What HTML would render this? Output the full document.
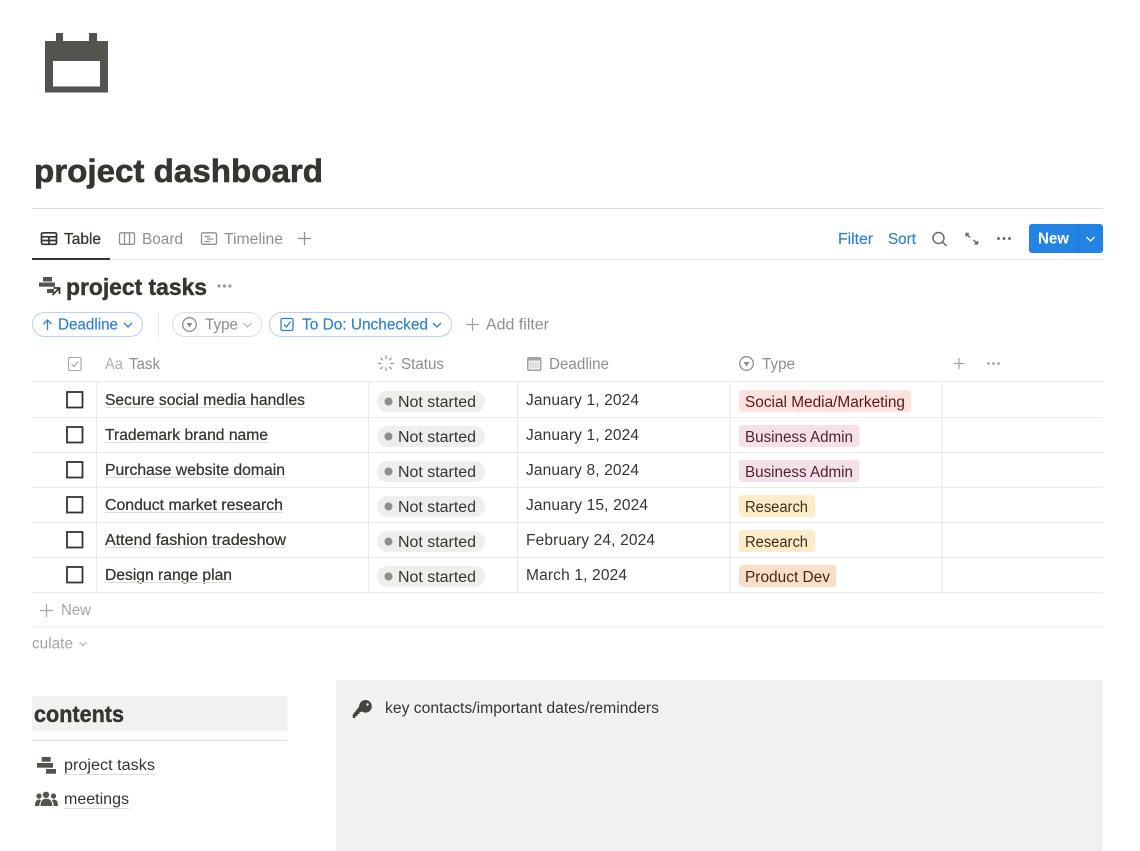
<!DOCTYPE html>
<html lang="en">
<head>
<meta charset="utf-8">
<title>project dashboard</title>
<style>
html,body{margin:0;padding:0;background:#fff;width:1140px;height:851px;overflow:hidden}
svg{display:block;filter:blur(.3px)}
text{font-family:"Liberation Sans",sans-serif;white-space:pre}
.g{fill:#8f8e8a;font-size:15.5px}
.b{fill:#2b7fd6;font-size:15.5px;stroke:#2b7fd6;stroke-width:.15}
.t{fill:#37352f;font-size:15.5px;stroke:#37352f;stroke-width:.25}
.d{fill:#37352f;font-size:15.5px}
.h{fill:#37352f;font-weight:bold}
.ln{stroke:#e9e9e7;stroke-width:1;fill:none}
.ic{stroke:#8f8e8a;stroke-width:1.3;fill:none}
.u{stroke:#dddcd9;stroke-width:1}
</style>
</head>
<body>
<svg width="1140" height="851" viewBox="0 0 1140 851" xmlns="http://www.w3.org/2000/svg">
<rect width="1140" height="851" fill="#fff"/>

<!-- page icon -->
<path fill="#55534e" fill-rule="evenodd" d="M45 41H56V33H63V41H89V33H97V41H108V92.500H45ZM53 61V86.500H100V61Z"/>

<text class="h" x="34" y="182" font-size="32" stroke="#37352f" stroke-width=".6" textLength="289" lengthAdjust="spacingAndGlyphs">project dashboard</text>
<line x1="32" y1="208.500" x2="1103" y2="208.500" stroke="#deddda"/>

<!-- tabs -->
<g fill="none" stroke="#37352f" stroke-width="1.700">
<rect x="41.500" y="232.800" width="15" height="11.500" rx="1.500"/>
<path d="M41.500 236.800H56.500M41.500 240.500H56.500M49 236.800V244.300"/>
</g>
<text x="64" y="244" font-size="15.5" fill="#37352f" stroke="#37352f" stroke-width=".25" textLength="37" lengthAdjust="spacingAndGlyphs">Table</text>
<g class="ic">
<rect x="119.500" y="232.800" width="15" height="11.500" rx="1.500"/>
<path d="M124.500 232.800V244.300M129.500 232.800V244.300"/>
<rect x="201.500" y="232.800" width="15" height="11.500" rx="1.500"/>
<path d="M204.500 236.500H210M207 239H213.500M204.500 241.500H210"/>
<path d="M304.500 232V245M298 238.500H311"/>
</g>
<text class="g" x="142" y="244" textLength="41" lengthAdjust="spacingAndGlyphs">Board</text>
<text class="g" x="224" y="244" textLength="59" lengthAdjust="spacingAndGlyphs">Timeline</text>
<line x1="32" y1="259.500" x2="1103" y2="259.500" class="ln"/>
<rect x="32" y="258" width="78" height="2" fill="#37352f"/>

<!-- right tools -->
<text class="b" x="838" y="244" textLength="35" lengthAdjust="spacingAndGlyphs">Filter</text>
<text class="b" x="888" y="244" textLength="28" lengthAdjust="spacingAndGlyphs">Sort</text>
<g fill="none" stroke="#6b6a66" stroke-width="1.500">
<circle cx="938.500" cy="238" r="5.500"/>
<path d="M942.500 242L946.500 246"/>
<path d="M966 233.500L970 237.500M966 233.500H969M966 233.500V236.500M977.500 244L973.500 240M977.500 244H974.500M977.500 244V241"/>
</g>
<g fill="#6b6a66"><circle cx="998.500" cy="238.500" r="1.500"/><circle cx="1004" cy="238.500" r="1.500"/><circle cx="1009.500" cy="238.500" r="1.500"/></g>
<rect x="1029" y="224" width="74" height="29" rx="3" fill="#2383e2"/>
<line x1="1078.500" y1="224" x2="1078.500" y2="253" stroke="#1f76cc"/>
<text x="1038" y="243.500" font-size="16" font-weight="bold" fill="#fff" textLength="31" lengthAdjust="spacingAndGlyphs">New</text>
<path d="M1086.500 237L1090.500 241L1094.500 237" fill="none" stroke="#fff" stroke-width="1.300"/>

<!-- db title -->
<g fill="#55534e">
<rect x="43" y="277" width="9" height="4.500"/>
<rect x="39" y="282.500" width="16" height="4.200"/>
<rect x="47" y="289" width="7" height="4"/>
</g>
<path d="M52.500 295L59 288.500M53.500 288H59.500V294" fill="none" stroke="#37352f" stroke-width="1.800"/>
<text class="h" x="66" y="295" font-size="23.500" stroke="#37352f" stroke-width=".45" textLength="141" lengthAdjust="spacingAndGlyphs">project tasks</text>
<g fill="#999894"><circle cx="219" cy="286" r="1.600"/><circle cx="224.500" cy="286" r="1.600"/><circle cx="230" cy="286" r="1.600"/></g>

<!-- filters -->
<rect x="32.500" y="312.500" width="110" height="24" rx="12" fill="#fff" stroke="#b5d3f2"/>
<path d="M47.500 330V320M43.500 324L47.500 320L51.500 324" fill="none" stroke="#2b7fd6" stroke-width="1.300"/>
<text class="b" x="58" y="329.500" textLength="60" lengthAdjust="spacingAndGlyphs">Deadline</text>
<path d="M124 323L128 327L132 323" fill="none" stroke="#2b7fd6" stroke-width="1.300"/>
<line x1="158.500" y1="312" x2="158.500" y2="337" class="ln"/>
<rect x="172.500" y="312.500" width="89" height="24" rx="12" fill="#fff" stroke="#deddda"/>
<circle cx="189.500" cy="324.500" r="6.800" class="ic"/>
<path d="M186.500 323H192.500L189.500 327.500Z" fill="#8f8e8a"/>
<text class="g" x="205" y="329.500" textLength="33" lengthAdjust="spacingAndGlyphs">Type</text>
<path d="M243.500 323L247.500 327L251.500 323" fill="none" stroke="#b5b4b1" stroke-width="1.200"/>
<rect x="269.500" y="312.500" width="182" height="24" rx="12" fill="#fff" stroke="#b5d3f2"/>
<rect x="281" y="318.500" width="12" height="12" rx="1.500" fill="none" stroke="#2b7fd6" stroke-width="1.300"/>
<path d="M284 324.500L286.500 327L290.500 321.500" fill="none" stroke="#2b7fd6" stroke-width="1.300"/>
<text class="b" x="302" y="329.500" textLength="126" lengthAdjust="spacingAndGlyphs">To Do: Unchecked</text>
<path d="M433 323L437 327L441 323" fill="none" stroke="#2b7fd6" stroke-width="1.300"/>
<path d="M472.500 318V331M466 324.500H479" class="ic" style="stroke:#a5a4a0"/>
<text class="g" x="486" y="329.500" textLength="63" lengthAdjust="spacingAndGlyphs">Add filter</text>

<!-- table header -->
<rect x="68.500" y="357.500" width="12.500" height="13" rx="1.500" fill="none" stroke="#a5a4a0" stroke-width="1.100"/>
<path d="M71.500 364L74 366.500L78 361.500" fill="none" stroke="#a5a4a0" stroke-width="1.100"/>
<text x="105" y="369" font-size="15.5" fill="#b0afab" textLength="18" lengthAdjust="spacingAndGlyphs">Aa</text>
<text class="g" x="129" y="369" textLength="31" lengthAdjust="spacingAndGlyphs">Task</text>
<path d="M386 355.500V359M386 367.500V371M378 363.500H381.500M390.500 363.500H394M380.300 357.800L382.800 360.300M389.200 366.700L391.700 369.200M391.700 357.800L389.200 360.300M382.800 366.700L380.300 369.200" fill="none" stroke="#9a9995" stroke-width="1.300"/>
<text class="g" x="401" y="369" textLength="43" lengthAdjust="spacingAndGlyphs">Status</text>
<rect x="527" y="357" width="14.500" height="14" rx="2" fill="#a5a4a0"/>
<rect x="528.500" y="360.500" width="11.500" height="9" fill="#f1f1ef"/>
<path d="M530 363H538.500M530 365H538.500M530 367H538.500" stroke="#b5b4b1" stroke-width="1" stroke-dasharray="1.500 1"/>
<text class="g" x="549" y="369" textLength="60" lengthAdjust="spacingAndGlyphs">Deadline</text>
<circle cx="746.500" cy="363.500" r="6.800" class="ic"/>
<path d="M743.500 362H749.500L746.500 366.500Z" fill="#8f8e8a"/>
<text class="g" x="762" y="369" textLength="33" lengthAdjust="spacingAndGlyphs">Type</text>
<path d="M959 358V369M953.500 363.500H964.500" class="ic" style="stroke:#a5a4a0"/>
<g fill="#a5a4a0"><circle cx="988.500" cy="363.500" r="1.400"/><circle cx="993.500" cy="363.500" r="1.400"/><circle cx="998.500" cy="363.500" r="1.400"/></g>

<!-- grid -->
<g class="ln">
<path d="M32 381.500H1103M32 417.500H1103M32 452.500H1103M32 487.500H1103M32 522.500H1103M32 557.500H1103M32 592.500H1103M32 627H1103"/>
<path d="M96.500 381V593M368.500 381V593M517.500 381V593M730 381V593M942 381V593"/>
</g>

<!-- checkboxes -->
<g fill="none" stroke="#37352f" stroke-width="1.800">
<rect x="67" y="392" width="15.500" height="15.500"/>
<rect x="67" y="427" width="15.500" height="15.500"/>
<rect x="67" y="462" width="15.500" height="15.500"/>
<rect x="67" y="497" width="15.500" height="15.500"/>
<rect x="67" y="532" width="15.500" height="15.500"/>
<rect x="67" y="567" width="15.500" height="15.500"/>
</g>

<!-- task names -->
<text class="t" x="105" y="405" textLength="200" lengthAdjust="spacingAndGlyphs">Secure social media handles</text>
<line x1="105" y1="407.500" x2="305" y2="407.500" class="u"/>
<text class="t" x="105" y="440" textLength="163" lengthAdjust="spacingAndGlyphs">Trademark brand name</text>
<line x1="105" y1="442.500" x2="268" y2="442.500" class="u"/>
<text class="t" x="105" y="475" textLength="180" lengthAdjust="spacingAndGlyphs">Purchase website domain</text>
<line x1="105" y1="477.500" x2="285" y2="477.500" class="u"/>
<text class="t" x="105" y="510" textLength="178" lengthAdjust="spacingAndGlyphs">Conduct market research</text>
<line x1="105" y1="512.500" x2="283" y2="512.500" class="u"/>
<text class="t" x="105" y="545" textLength="181" lengthAdjust="spacingAndGlyphs">Attend fashion tradeshow</text>
<line x1="105" y1="547.500" x2="286" y2="547.500" class="u"/>
<text class="t" x="105" y="580" textLength="127" lengthAdjust="spacingAndGlyphs">Design range plan</text>
<line x1="105" y1="582.500" x2="232" y2="582.500" class="u"/>

<!-- status -->
<g fill="#eeeeec">
<rect x="377" y="391" width="108" height="21" rx="10.500"/>
<rect x="377" y="426" width="108" height="21" rx="10.500"/>
<rect x="377" y="461" width="108" height="21" rx="10.500"/>
<rect x="377" y="496" width="108" height="21" rx="10.500"/>
<rect x="377" y="531" width="108" height="21" rx="10.500"/>
<rect x="377" y="566" width="108" height="21" rx="10.500"/>
</g>
<g fill="#8f8e8a">
<circle cx="388.500" cy="401.500" r="4"/>
<circle cx="388.500" cy="436.500" r="4"/>
<circle cx="388.500" cy="471.500" r="4"/>
<circle cx="388.500" cy="506.500" r="4"/>
<circle cx="388.500" cy="541.500" r="4"/>
<circle cx="388.500" cy="576.500" r="4"/>
</g>
<text class="d" x="398" y="407" textLength="78" lengthAdjust="spacingAndGlyphs">Not started</text>
<text class="d" x="398" y="442" textLength="78" lengthAdjust="spacingAndGlyphs">Not started</text>
<text class="d" x="398" y="477" textLength="78" lengthAdjust="spacingAndGlyphs">Not started</text>
<text class="d" x="398" y="512" textLength="78" lengthAdjust="spacingAndGlyphs">Not started</text>
<text class="d" x="398" y="547" textLength="78" lengthAdjust="spacingAndGlyphs">Not started</text>
<text class="d" x="398" y="582" textLength="78" lengthAdjust="spacingAndGlyphs">Not started</text>

<!-- dates -->
<text class="d" x="526" y="405" textLength="113" lengthAdjust="spacing">January 1, 2024</text>
<text class="d" x="526" y="440" textLength="113" lengthAdjust="spacing">January 1, 2024</text>
<text class="d" x="526" y="475" textLength="113" lengthAdjust="spacing">January 8, 2024</text>
<text class="d" x="526" y="510" textLength="122" lengthAdjust="spacing">January 15, 2024</text>
<text class="d" x="526" y="545" textLength="129" lengthAdjust="spacing">February 24, 2024</text>
<text class="d" x="526" y="580" textLength="101" lengthAdjust="spacing">March 1, 2024</text>

<!-- tags -->
<rect x="739" y="390" width="172" height="22" rx="3" fill="#ffe2dd"/>
<text x="745" y="407" font-size="15.5" fill="#5d1715" textLength="160" lengthAdjust="spacingAndGlyphs">Social Media/Marketing</text>
<rect x="739" y="425" width="120.500" height="22" rx="3" fill="#f5e0e9"/>
<text x="745" y="442" font-size="15.5" fill="#4c2337" textLength="108" lengthAdjust="spacingAndGlyphs">Business Admin</text>
<rect x="739" y="460" width="120.500" height="22" rx="3" fill="#f5e0e9"/>
<text x="745" y="477" font-size="15.5" fill="#4c2337" textLength="108" lengthAdjust="spacingAndGlyphs">Business Admin</text>
<rect x="739" y="495" width="76" height="22" rx="3" fill="#fdecc8"/>
<text x="745" y="512" font-size="15.5" fill="#402c1b" textLength="63" lengthAdjust="spacingAndGlyphs">Research</text>
<rect x="739" y="530" width="76" height="22" rx="3" fill="#fdecc8"/>
<text x="745" y="547" font-size="15.5" fill="#402c1b" textLength="63" lengthAdjust="spacingAndGlyphs">Research</text>
<rect x="739" y="565" width="97" height="22" rx="3" fill="#fadec9"/>
<text x="745" y="582" font-size="15.5" fill="#49290e" textLength="85" lengthAdjust="spacingAndGlyphs">Product Dev</text>

<!-- new row / calculate -->
<path d="M46.500 604V617M40 610.500H53" class="ic" style="stroke:#a5a4a0"/>
<text x="61" y="615" font-size="15.5" fill="#a5a4a0" textLength="30" lengthAdjust="spacingAndGlyphs">New</text>
<text x="32" y="648.500" font-size="15.5" fill="#a5a4a0" textLength="41" lengthAdjust="spacingAndGlyphs">culate</text>
<path d="M79.500 642L83 645.500L86.500 642" fill="none" stroke="#b5b4b1" stroke-width="1.200"/>

<!-- contents -->
<rect x="32" y="696" width="255.500" height="35" fill="#f1f1ef"/>
<text class="h" x="34" y="722" font-size="23.500" stroke="#37352f" stroke-width=".45" textLength="90" lengthAdjust="spacingAndGlyphs">contents</text>
<line x1="32" y1="740.500" x2="287.500" y2="740.500" stroke="#deddda"/>
<g fill="#55534e">
<rect x="41.700" y="757" width="9" height="4.700"/>
<rect x="37" y="763" width="16" height="4.700"/>
<rect x="46" y="769" width="10" height="4.700"/>
<circle cx="46" cy="794.800" r="3.200"/>
<circle cx="39" cy="796" r="2.600"/>
<circle cx="53.500" cy="796" r="2.600"/>
<path d="M40.500 806C40.500 801 42.500 798.800 46.300 798.800C50 798.800 52.300 801 52.300 806Z"/>
<path d="M35 806C35 802 36.200 799.500 39 799.500C40.500 799.500 41 800.200 41 800.200C39.800 802 39.300 804 39.300 806Z"/>
<path d="M58 806C58 802 56.800 799.500 54 799.500C52.500 799.500 52 800.200 52 800.200C53.200 802 53.700 804 53.700 806Z"/>
</g>
<text class="d" x="64" y="770" textLength="91" lengthAdjust="spacingAndGlyphs">project tasks</text>
<line x1="64" y1="774.500" x2="155" y2="774.500" class="u"/>
<text class="d" x="64" y="804" textLength="65" lengthAdjust="spacingAndGlyphs">meetings</text>
<line x1="64" y1="808.500" x2="129" y2="808.500" class="u"/>

<!-- callout -->
<path d="M336 851V683A3 3 0 0 1 339 680H1100A3 3 0 0 1 1103 683V851Z" fill="#f1f1ef"/>
<g fill="#45433e">
<path fill-rule="evenodd" d="M365.500 700A6.300 6.300 0 1 1 365.500 712.600A6.300 6.300 0 1 1 365.500 700ZM367.500 703.300A1.200 1.200 0 1 0 367.600 705.700A1.200 1.200 0 1 0 367.500 703.300Z"/>
<path d="M360 705.500L363.500 710L361 712H359.500V714H357.500V716H356L354.500 718.500L352.700 717.500V714.800Z"/>
</g>
<text class="d" x="385" y="713" textLength="274" lengthAdjust="spacingAndGlyphs">key contacts/important dates/reminders</text>
</svg>
</body>
</html>
